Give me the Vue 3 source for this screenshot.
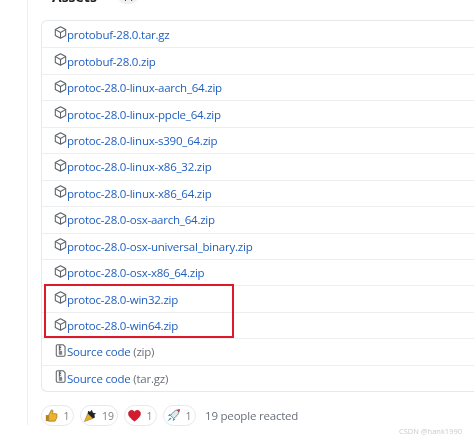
<template>
  <div class="page">
    <div class="release">
      <div class="assets-head">
        <span class="caret"></span>
        <span class="assets-title">Assets</span>
        <span class="counter">11</span>
      </div>

      <div class="assets-wrap">
        <ul class="assets">
          <li v-for="asset in assets" :key="asset.name + asset.suffix" class="asset">
            <svg v-if="!asset.suffix" class="icon" viewBox="0 0 16 16" aria-hidden="true">
              <path d="M8 1 14.4 4.4V11.6L8 15 1.6 11.6V4.4Z" />
              <path d="M1.8 4.5 8 8 14.2 4.5M8 8V14.8" />
            </svg>
            <svg v-else class="icon" viewBox="0 0 16 16" aria-hidden="true">
              <path d="M4.2 1H11.4L13.6 3.2V13.6A1.4 1.4 0 0 1 12.2 15H4.2A1.4 1.4 0 0 1 2.8 13.6V2.4A1.4 1.4 0 0 1 4.2 1Z" />
              <path d="M6.6 1.4V8.4M8.8 2.4H6.8M8.8 4.4H6.8M8.8 6.4H6.8" />
              <path d="M6.4 8.8H9.6V12.8H6.4Z" class="fill" />
            </svg>
            <a class="name">{{ asset.name }}</a>
            <span v-if="asset.suffix" class="suffix">&nbsp;{{ asset.suffix }}</span>
          </li>
        </ul>
        <div class="highlight"></div>
      </div>

      <div class="reactions">
        <span v-for="r in reactions" :key="r.id" class="pill" :class="'pill-' + r.id">
          <svg v-if="r.id === 'thumb'" class="emoji" viewBox="0 0 16 16" aria-hidden="true">
            <path d="M1 7.5H4.5V15H1Z" fill="#b9811c" />
            <path d="M4.5 7.5 8 1C9.8 1 10.2 2.8 9.6 4.2L9.2 5.8H13.6C15 5.8 15.3 7.4 14.5 8.2 15.1 9 14.9 10.1 14.2 10.6 14.5 11.5 14.1 12.4 13.4 12.7 13.5 13.9 12.9 15 11.7 15H4.5Z" fill="#eeb22f" stroke="#8a6a1c" stroke-width=".8" />
          </svg>
          <svg v-else-if="r.id === 'tada'" class="emoji" viewBox="0 0 16 16" aria-hidden="true">
            <path d="M0.5 15.5 4.6 5.4 11 11.6Z" fill="#e8ad25" stroke="#8a6a1c" stroke-width=".6" />
            <path d="M4.6 5.4 11 11.6 13.4 10.4 12.8 6.8 15.2 5.6 11 4.6 9.6 0.8 7.6 3.4 5 2.6Z" fill="#20242a" />
          </svg>
          <svg v-else-if="r.id === 'heart'" class="emoji" viewBox="0 0 16 16" aria-hidden="true">
            <path d="M8 15C3.2 11.4 0.5 8.9 0.5 5.5 0.5 3.2 2.3 1.6 4.4 1.6 5.9 1.6 7.2 2.4 8 3.7 8.8 2.4 10.1 1.6 11.6 1.6 13.7 1.6 15.5 3.2 15.5 5.5 15.5 8.9 12.8 11.4 8 15Z" fill="#d81a30" stroke="#a5152a" stroke-width=".6" />
          </svg>
          <svg v-else class="emoji" viewBox="0 0 16 16" aria-hidden="true">
            <path d="M15.5 .5C11.6 .8 8.4 2.6 6 5.8L4.4 8 8 11.6 10.2 10C13.4 7.6 15.2 4.4 15.5 .5Z" fill="#dfeaef" stroke="#40626f" stroke-width=".8" />
            <path d="M15.5 .5C14.4 .6 13.2 1 12 1.5L14.5 4C15 2.8 15.4 1.6 15.5 .5Z" fill="#d5303a" />
            <path d="M4.4 8 1 9 3.8 5.6ZM8 11.6 7 15 10.4 12.2Z" fill="#2f7f9f" />
            <path d="M4 10.5 .5 15.5 5.5 12Z" fill="#3d8fb0" />
          </svg>
          <span class="count">{{ r.count }}</span>
        </span>
        <span class="reacted">19 people reacted</span>
      </div>
    </div>
    <span class="watermark">CSDN @hank1990</span>
  </div>
</template>

<script setup>
const assets = [
  { name: 'protobuf-28.0.tar.gz' },
  { name: 'protobuf-28.0.zip' },
  { name: 'protoc-28.0-linux-aarch_64.zip' },
  { name: 'protoc-28.0-linux-ppcle_64.zip' },
  { name: 'protoc-28.0-linux-s390_64.zip' },
  { name: 'protoc-28.0-linux-x86_32.zip' },
  { name: 'protoc-28.0-linux-x86_64.zip' },
  { name: 'protoc-28.0-osx-aarch_64.zip' },
  { name: 'protoc-28.0-osx-universal_binary.zip' },
  { name: 'protoc-28.0-osx-x86_64.zip' },
  { name: 'protoc-28.0-win32.zip' },
  { name: 'protoc-28.0-win64.zip' },
  { name: 'Source code', suffix: '(zip)' },
  { name: 'Source code', suffix: '(tar.gz)' }
]

const reactions = [
  { id: 'thumb', count: 1 },
  { id: 'tada', count: 19 },
  { id: 'heart', count: 1 },
  { id: 'rocket', count: 1 }
]
</script>

<style>
body {
  background: #fff;
}
</style>

<style scoped>
.page {
  position: relative;
  width: 474px;
  height: 439px;
  overflow: hidden;
  background: #fff;
  font-family: "Open Sans", "Liberation Sans", sans-serif;
  filter: blur(0.35px);
}

.release {
  margin-left: 27px;
  height: 439px;
  border-left: 1px solid #eceef0;
  padding-left: 13px;
}

.assets-head {
  display: flex;
  align-items: center;
  height: 20px;
  margin-top: -14px;
  margin-bottom: 14px;
  padding-left: 2px;
}

.caret {
  width: 0;
  height: 0;
  border-top: 4px solid transparent;
  border-bottom: 4px solid transparent;
  border-left: 5px solid #1f2328;
  margin-right: 4px;
}

.assets-title {
  font-size: 14px;
  font-weight: 700;
  color: #1f2328;
}

.counter {
  margin-left: 21px;
  padding: 0 4px;
  border-radius: 10px;
  background: #eff1f3;
  font-size: 11px;
  color: #1f2328;
}

.assets-wrap {
  position: relative;
}

.assets {
  list-style: none;
  margin: 0;
  padding: 0;
  border: 1px solid #e6e8ea;
  border-right: 0;
  border-radius: 6px 0 0 6px;
}

.asset {
  display: flex;
  align-items: center;
  height: 26.45px;
  box-sizing: border-box;
  padding-left: 12px;
  border-top: 1px solid #eceef0;
  font-size: 11.5px;
  letter-spacing: -0.22px;
}

.asset:first-child {
  border-top: 0;
}

.icon {
  flex: none;
  width: 13px;
  height: 13px;
  margin-top: -3px;
  fill: none;
  stroke: #5c6167;
  stroke-width: 1.3;
  stroke-linejoin: round;
}

.icon .fill {
  fill: #7d8287;
  stroke-width: 0.6;
}

.name {
  color: #1f5fc0;
  font-weight: 500;
}

.suffix {
  color: #6a7079;
}

.highlight {
  position: absolute;
  left: 3px;
  top: 264px;
  width: 190px;
  height: 54px;
  box-sizing: border-box;
  border: 2px solid #dc1a2c;
}

.reactions {
  display: flex;
  align-items: center;
  margin-top: 13px;
  gap: 6px;
}

.pill {
  display: flex;
  align-items: center;
  justify-content: center;
  gap: 5px;
  box-sizing: border-box;
  height: 21px;
  width: 33px;
  border: 1px solid #e6e8ea;
  border-radius: 11px;
  font-size: 10.5px;
  color: #7a8088;
}

.pill-tada {
  width: 38px;
}

.emoji {
  flex: none;
  width: 13px;
  height: 13px;
}

.reacted {
  margin-left: 3px;
  font-size: 11.5px;
  letter-spacing: -0.2px;
  color: #6a7079;
}

.watermark {
  position: absolute;
  right: 12px;
  bottom: 3px;
  font-size: 7.5px;
  color: #c9cbce;
}
</style>
